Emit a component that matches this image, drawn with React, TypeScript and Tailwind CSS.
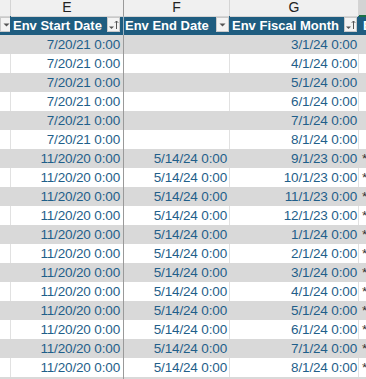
import React from "react";

type Row = { start: string; end: string; month: string; h: string };

const rows: Row[] = [
  { start: "7/20/21 0:00", end: "", month: "3/1/24 0:00", h: "" },
  { start: "7/20/21 0:00", end: "", month: "4/1/24 0:00", h: "" },
  { start: "7/20/21 0:00", end: "", month: "5/1/24 0:00", h: "" },
  { start: "7/20/21 0:00", end: "", month: "6/1/24 0:00", h: "" },
  { start: "7/20/21 0:00", end: "", month: "7/1/24 0:00", h: "" },
  { start: "7/20/21 0:00", end: "", month: "8/1/24 0:00", h: "" },
  { start: "11/20/20 0:00", end: "5/14/24 0:00", month: "9/1/23 0:00", h: "*" },
  { start: "11/20/20 0:00", end: "5/14/24 0:00", month: "10/1/23 0:00", h: "*" },
  { start: "11/20/20 0:00", end: "5/14/24 0:00", month: "11/1/23 0:00", h: "*" },
  { start: "11/20/20 0:00", end: "5/14/24 0:00", month: "12/1/23 0:00", h: "*" },
  { start: "11/20/20 0:00", end: "5/14/24 0:00", month: "1/1/24 0:00", h: "*" },
  { start: "11/20/20 0:00", end: "5/14/24 0:00", month: "2/1/24 0:00", h: "*" },
  { start: "11/20/20 0:00", end: "5/14/24 0:00", month: "3/1/24 0:00", h: "*" },
  { start: "11/20/20 0:00", end: "5/14/24 0:00", month: "4/1/24 0:00", h: "*" },
  { start: "11/20/20 0:00", end: "5/14/24 0:00", month: "5/1/24 0:00", h: "*" },
  { start: "11/20/20 0:00", end: "5/14/24 0:00", month: "6/1/24 0:00", h: "*" },
  { start: "11/20/20 0:00", end: "5/14/24 0:00", month: "7/1/24 0:00", h: "*" },
  { start: "11/20/20 0:00", end: "5/14/24 0:00", month: "8/1/24 0:00", h: "*" },
  { start: "11/20/20 0:00", end: "5/14/24 0:00", month: "9/1/24 0:00", h: "*" },
];

function FilterButton({ sorted }: { sorted?: boolean }) {
  return (
    <div className="w-[13px] h-[15px] shrink-0 bg-[#f3f3f3] border border-[#c9c9c9] flex items-center justify-center">
      <svg width="11" height="13" viewBox="0 0 11 13">
        {sorted ? (
          <>
            <path d="M1 8.5h5l-2.5 2.5z" fill="#555" />
            <path d="M8.5 3v8M6.8 4.8L8.5 3l1.7 1.8" stroke="#555" strokeWidth="1" fill="none" />
          </>
        ) : (
          <path d="M2.5 5.5h6l-3 3z" fill="#555" />
        )}
      </svg>
    </div>
  );
}

const grid = "grid grid-cols-[11px_113px_106px_129px_60px]";

export default function App() {
  return (
    <div className="w-[366px] h-[379px] overflow-hidden bg-white font-['Liberation_Sans',Arial,sans-serif] text-[13px]">
      {/* column letters */}
      <div className={`${grid} h-[16px] bg-[#f0f0f0] text-[#222] text-[14px] leading-[15px]`}>
        <div className="border-r border-b border-[#d4d4d4]" />
        <div className="border-r border-b border-r-[#9a9a9a] border-b-[#d4d4d4] text-center">E</div>
        <div className="border-r border-b border-[#d4d4d4] text-center">F</div>
        <div className="border-r border-b border-[#d4d4d4] text-center">G</div>
        <div className="bg-[#d3d3d3] border-b-2 border-[#1e7145] text-center">H</div>
      </div>

      {/* table header */}
      <div className={`${grid} h-[19px] bg-[#1f5d80] text-white font-bold leading-[17px]`}>
        <div className="border-r border-[#1f5d80] overflow-hidden flex justify-end items-start pt-[1px] pr-[1px]">
          <div className="-mr-[4px]">
            <FilterButton />
          </div>
        </div>
        <div className="border-r border-[#9fb3c1] flex items-start justify-between pl-[2px] pr-[3px] pt-[1px] overflow-hidden">
          <span className="whitespace-nowrap">Env Start Date</span>
          <FilterButton sorted />
        </div>
        <div className="border-r border-[#1f5d80] flex items-start justify-between pl-[1px] pt-[1px] overflow-hidden">
          <span className="whitespace-nowrap overflow-hidden">Env End Date</span>
          <FilterButton />
        </div>
        <div className="border-r border-[#1f5d80] flex items-start justify-between pl-[2px] pr-[1px] pt-[1px] overflow-hidden">
          <span className="whitespace-nowrap">Env Fiscal Month</span>
          <FilterButton sorted />
        </div>
        <div className="pl-[4px] pt-[1px] whitespace-nowrap overflow-hidden">Env Fiscal Year</div>
      </div>

      {/* data rows */}
      {rows.map((r, i) => {
        const band = i % 2 === 0;
        const line = band ? "border-[#d9d9d9]" : "border-[#e1e1e1]";
        return (
          <div
            key={i}
            className={`${grid} h-[19px] leading-[20px] text-[13.5px] tracking-[-0.15px] text-[#1f5f8a] ${band ? "bg-[#d9d9d9]" : "bg-white"}`}
          >
            <div className={`border-r ${line}`} />
            <div className="border-r border-[#9a9a9a] text-right pr-[3px] whitespace-nowrap">{r.start}</div>
            <div className={`border-r ${line} text-right pr-[2px] whitespace-nowrap`}>{r.end}</div>
            <div className={`border-r ${line} text-right pr-[1px] whitespace-nowrap`}>{r.month}</div>
            <div className="pl-[3px] text-[#333] whitespace-nowrap">{r.h}</div>
          </div>
        );
      })}
    </div>
  );
}
